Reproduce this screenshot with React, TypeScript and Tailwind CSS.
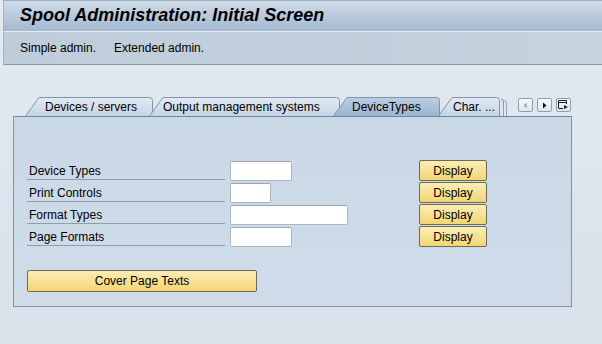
import React from 'react';

const font = { fontFamily: '"Liberation Sans", Arial, sans-serif' };

// Tab with slanted left edge, drawn as an svg shape behind the label
function Tab({
  label,
  width,
  padLeft,
  active = false,
  stacked = false,
  className = '',
}: {
  label: string;
  width: number;
  padLeft: number;
  active?: boolean;
  stacked?: boolean;
  className?: string;
}) {
  const h = 19;
  const slant = 14;
  const gid = `g-${label.replace(/[^a-z]/gi, '')}`;
  return (
    <div
      className={`relative h-[19px] shrink-0 flex items-center text-[12px] text-black ${active ? 'z-10' : ''} ${className}`}
      style={{ width: stacked ? width + 8 : width }}
    >
      <svg
        className="absolute inset-0"
        width={stacked ? width + 8 : width}
        height={h}
        aria-hidden="true"
      >
        <defs>
          <linearGradient id={gid} x1="0" y1="0" x2="0" y2="1">
            <stop offset="0" stopColor={active ? '#bccde1' : '#e3eaf2'} />
            <stop offset="1" stopColor={active ? '#9cb5d2' : '#c4d4e5'} />
          </linearGradient>
        </defs>
        {stacked && (
          <>
            <path d={`M${width + 6.5} ${h} L${width + 6.5} 5 Q${width + 6.5} 3.5 ${width + 4} 3.5`} fill="none" stroke="#93a6bd" />
            <path d={`M${width + 3.5} ${h} L${width + 3.5} 4 Q${width + 3.5} 2 ${width + 1} 2`} fill="#d3dfeb" stroke="#8a9eb7" />
          </>
        )}
        <path
          d={`M0.5 ${h} L${slant} 0.5 L${width - 3.5} 0.5 Q${width - 0.5} 0.5 ${width - 0.5} 3.5 L${width - 0.5} ${h}`}
          fill={`url(#${gid})`}
          stroke="#7f95b0"
        />
      </svg>
      <span className="relative whitespace-nowrap" style={{ paddingLeft: padLeft }}>
        {label}
      </span>
    </div>
  );
}

function NavButton({ children }: { children: React.ReactNode }) {
  return (
    <div className="w-[15px] h-[14px] flex items-center justify-center border border-[#8d9db2] rounded-[2px] bg-gradient-to-b from-[#f7f9fb] to-[#dfe6ee]">
      {children}
    </div>
  );
}

function DisplayButton({ label, className = '' }: { label: string; className?: string }) {
  return (
    <button
      className={`h-[21px] flex items-center justify-center border border-[#6e6a58] rounded-[2px] bg-gradient-to-b from-[#fcedb4] to-[#f3d572] text-[12px] text-black ${className}`}
      style={font}
    >
      {label}
    </button>
  );
}

const rows = [
  { label: 'Device Types', input: 'w-[62px]' },
  { label: 'Print Controls', input: 'w-[41px]' },
  { label: 'Format Types', input: 'w-[118px]' },
  { label: 'Page Formats', input: 'w-[62px]' },
];

export default function App() {
  return (
    <div className="w-[602px] h-[344px] flex flex-col overflow-hidden bg-gradient-to-b from-[#e3e9f0] to-[#d9e1ea]" style={font}>
      {/* Title bar */}
      <div className="ml-[3px] h-[32px] shrink-0 flex items-center pl-[16px] pb-[3px] border-l border-t border-b border-l-[#a3b2c3] border-t-[#9aabbf] border-b-[#e6ecf2] bg-gradient-to-b from-[#d0dbe7] to-[#a3b8cf]">
        <h1 className="text-[18px] font-bold italic text-black leading-none" style={font}>
          Spool Administration: Initial Screen
        </h1>
      </div>

      {/* Application toolbar */}
      <div className="ml-[3px] h-[33px] shrink-0 flex items-center gap-[18px] pl-[16px] text-[12px] text-black border-l border-b border-l-[#a3b2c3] border-b-[#8898aa] bg-gradient-to-r from-[#bfcdda] to-[#c6d2de]">
        <span>Simple admin.</span>
        <span>Extended admin.</span>
      </div>

      {/* Content */}
      <div className="flex-1 pt-[32px] pl-[13px]">
        <div className="w-[559px]">
          {/* Tab strip */}
          <div className="h-[19px] flex items-end pl-[12px]">
            <Tab label="Devices / servers" width={128} padLeft={20} />
            <Tab label="Output management systems" width={191} padLeft={14} className="-ml-[4px]" />
            <Tab label="DeviceTypes" width={107} padLeft={19} active className="-ml-[7px]" />
            <Tab label="Char. ..." width={62} padLeft={15} stacked className="-ml-[2px]" />
            <div className="ml-auto self-start mt-[1px] flex gap-[4px] pr-[1px]">
              <NavButton>
                <svg width="5" height="7" viewBox="0 0 5 7" aria-hidden="true">
                  <path d="M4 0.5 L0.5 3.5 L4 6.5 Z" fill="#a3acb8" />
                </svg>
              </NavButton>
              <NavButton>
                <svg width="5" height="7" viewBox="0 0 5 7" aria-hidden="true">
                  <path d="M1 0.5 L4.5 3.5 L1 6.5 Z" fill="#111" />
                </svg>
              </NavButton>
              <NavButton>
                <svg width="11" height="10" viewBox="0 0 11 10" aria-hidden="true">
                  <path d="M0.5 0.5 H8.5 V4 M0.5 0.5 V8.5 H5" fill="none" stroke="#222" />
                  <path d="M0.5 2.5 H8.5" stroke="#222" />
                  <path d="M6 5 L10 7 L6 9 Z" fill="#222" />
                </svg>
              </NavButton>
            </div>
          </div>

          {/* Tab panel */}
          <div className="h-[191px] border border-[#7d93ae] border-t-[#6e86a5] bg-gradient-to-b from-[#cad8e6] to-[#cfdbe8] pt-[43px] pl-[13px]">
            <div className="flex flex-col">
              {rows.map((r) => (
                <div key={r.label} className="h-[22px] flex items-start">
                  <div className="w-[198px] h-[20px] border-b border-[#8e9eb1] pl-[2px] pt-[2px] flex items-center text-[12px] text-black">
                    {r.label}
                  </div>
                  <div className="w-[189px] ml-[5px] pt-[1px]">
                    <div className={`${r.input} h-[20px] bg-white border border-[#a9b6c4] border-t-[#98a6b6] rounded-[2px]`} />
                  </div>
                  <DisplayButton label="Display" className="w-[68px]" />
                </div>
              ))}
            </div>
            <DisplayButton label="Cover Page Texts" className="w-[230px] h-[22px] mt-[22px]" />
          </div>
        </div>
      </div>
    </div>
  );
}
